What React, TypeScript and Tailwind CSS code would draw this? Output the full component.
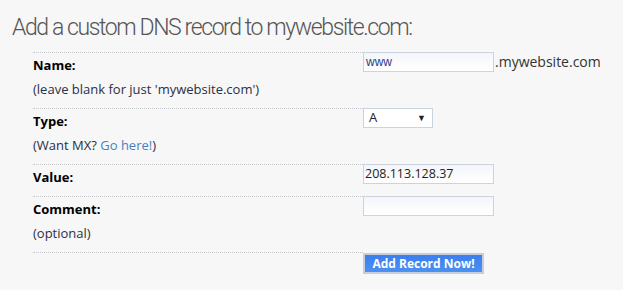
import React from 'react';

const rows = [
  { label: 'Name:', kind: 'name', hint: <>(leave blank for just 'mywebsite.com')</> },
  {
    label: 'Type:',
    kind: 'type',
    hint: (
      <>
        (Want MX? <a className="text-[#4a7fc4]">Go here!</a>)
      </>
    ),
  },
  { label: 'Value:', kind: 'value' },
  { label: 'Comment:', kind: 'comment', hint: <>(optional)</> },
];

const inputCls =
  'w-[131px] h-[20px] border border-[#c9d4de] bg-gradient-to-b from-[#f3f6f9] to-white px-[1px] text-[12.5px] leading-[18px] text-[#222] outline-none';

function Field({ kind }: { kind: string }) {
  if (kind === 'name') {
    return (
      <div className="flex items-start">
        <div className={inputCls + " font-['Liberation_Sans',sans-serif] !text-[12px] !text-[#2b3a8a] !px-[2px]"}>www</div>
        <span className="text-[14px] leading-[20px] text-[#333] ml-[1px]">.mywebsite.com</span>
      </div>
    );
  }
  if (kind === 'type') {
    return (
      <div className="w-[70px] h-[20px] border border-[#c9d4de] bg-white flex items-center justify-between pl-[5px] pr-[6px] text-[13px] text-[#222]">
        <span>A</span>
        <span className="text-[9px]">▼</span>
      </div>
    );
  }
  if (kind === 'value') return <div className={inputCls}>208.113.128.37</div>;
  return <div className={inputCls}></div>;
}

export default function App() {
  return (
    <div className="w-[623px] h-[290px] bg-[#f7f7f7] font-['Open_Sans',sans-serif]">
      <h1 className="pl-[12px] pt-[13px] text-[23px] leading-[29px] font-light tracking-[-1.4px] text-[#555] font-['Roboto',sans-serif]">
        Add a custom DNS record to mywebsite.com:
      </h1>
      <div className="ml-[33px] mt-[10px]">
        {rows.map((r) => (
          <div key={r.label} className="flex">
            <div className="w-[330px] border-t border-dotted border-[#c4c8cc] pt-[3px] pb-[10px]">
              <div className="text-[13px] leading-[18px] font-bold text-black">{r.label}</div>
              {r.hint && <div className="mt-[6px] text-[13px] leading-[18px] text-[#2a2f45]">{r.hint}</div>}
            </div>
            <div>
              <Field kind={r.kind} />
            </div>
          </div>
        ))}
        <div className="flex">
          <div className="w-[330px] border-t border-dotted border-[#c4c8cc]"></div>
          <button className="mt-[1px] w-[121px] h-[21px] border-2 border-[#c7ced6] bg-gradient-to-b from-[#3a7ef0] to-[#4b91f2] text-white font-bold text-[12px] leading-[17px]">
            Add Record Now!
          </button>
        </div>
      </div>
    </div>
  );
}
